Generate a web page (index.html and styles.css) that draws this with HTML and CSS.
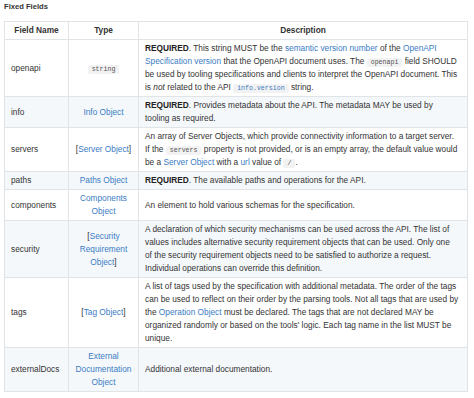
FILE: index.html
```html
<!DOCTYPE html>
<html>
<head>
<meta charset="utf-8">
<link rel="stylesheet" href="styles.css">
</head>
<body>
<h4 class="title">Fixed Fields</h4>
<table class="fields">
  <colgroup><col class="c1"><col class="c2"><col class="c3"></colgroup>
  <thead>
    <tr><th>Field Name</th><th>Type</th><th>Description</th></tr>
  </thead>
  <tbody>
    <tr>
      <td>openapi</td>
      <td class="type"><code>string</code></td>
      <td><strong>REQUIRED</strong>. This string MUST be the <a>semantic version number</a> of the <a>OpenAPI Specification version</a> that the OpenAPI document uses. The <code>openapi</code> field SHOULD be used by tooling specifications and clients to interpret the OpenAPI document. This is <em>not</em> related to the API <a><code class="lc">info.version</code></a> string.</td>
    </tr>
    <tr>
      <td>info</td>
      <td class="type"><a>Info Object</a></td>
      <td><strong>REQUIRED</strong>. Provides metadata about the API. The metadata MAY be used by<br>tooling as required.</td>
    </tr>
    <tr>
      <td>servers</td>
      <td class="type">[<a>Server Object</a>]</td>
      <td>An array of Server Objects, which provide connectivity information to a target server.<br>If the <code>servers</code> property is not provided, or is an empty array, the default value would be a <a>Server Object</a> with a <a>url</a> value of <code>/</code>.</td>
    </tr>
    <tr>
      <td>paths</td>
      <td class="type"><a>Paths Object</a></td>
      <td><strong>REQUIRED</strong>. The available paths and operations for the API.</td>
    </tr>
    <tr>
      <td>components</td>
      <td class="type"><a>Components Object</a></td>
      <td>An element to hold various schemas for the specification.</td>
    </tr>
    <tr>
      <td>security</td>
      <td class="type">[<a>Security Requirement Object</a>]</td>
      <td>A declaration of which security mechanisms can be used across the API. The list of values includes alternative security requirement objects that can be used. Only one<br>of the security requirement objects need to be satisfied to authorize a request.<br>Individual operations can override this definition.</td>
    </tr>
    <tr>
      <td>tags</td>
      <td class="type">[<a>Tag Object</a>]</td>
      <td>A list of tags used by the specification with additional metadata. The order of the tags can be used to reflect on their order by the parsing tools. Not all tags that are used by the <a>Operation Object</a> must be declared. The tags that are not declared MAY be organized randomly or based on the tools' logic. Each tag name in the list MUST be unique.</td>
    </tr>
    <tr>
      <td>externalDocs</td>
      <td class="type"><a>External Documentation Object</a></td>
      <td>Additional external documentation.</td>
    </tr>
  </tbody>
</table>
</body>
</html>
```
FILE: styles.css
```css
html, body {
  margin: 0;
  padding: 0;
  background: #ffffff;
}
body {
  padding: 0 4px;
  font-family: "Liberation Sans", Arial, sans-serif;
  font-size: 8.3px;
  line-height: 13px;
  color: #333333;
}
.title {
  margin: 0;
  padding: 1px 0 0;
  height: 21px;
  box-sizing: border-box;
  font-size: 7.6px;
  line-height: 11px;
  font-weight: bold;
  color: #333333;
}
.fields {
  border-collapse: collapse;
  width: 463px;
  table-layout: fixed;
}
.c1 { width: 64px; }
.c2 { width: 70px; }
.c3 { width: 329px; }
.fields th,
.fields td {
  border: 1px solid #e1e4e7;
  padding: 2px 6px;
  vertical-align: middle;
  text-align: left;
}
.fields th {
  text-align: center;
  font-weight: bold;
  padding: 2px 6px;
}
.fields td.type {
  text-align: center;
}
.fields tbody tr:nth-child(even) td {
  background: #f5f8fb;
}
a {
  color: #3a7cc4;
  text-decoration: none;
}
strong { font-weight: bold; color: #222; }
code {
  font-family: "Liberation Mono", "DejaVu Sans Mono", monospace;
  font-size: 6.6px;
  line-height: 1;
  background: #f2f2f2;
  color: #555555;
  padding: 1px 4px;
  border-radius: 2px;
}
code.lc {
  color: #3a7cc4;
}
```
